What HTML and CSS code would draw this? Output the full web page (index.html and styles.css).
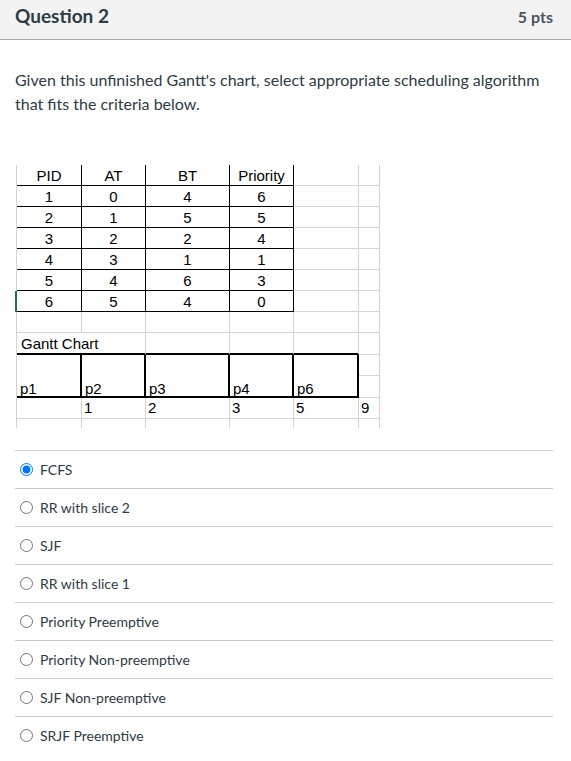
FILE: index.html
```html
<!DOCTYPE html>
<html lang="en">
<head>
<meta charset="utf-8">
<title>Question 2</title>
<link rel="stylesheet" href="styles.css">
</head>
<body>
<header class="q-header">
  <span class="q-title">Question 2</span>
  <span class="q-pts">5 pts</span>
</header>
<main class="q-body">
  <p class="q-text">Given this unfinished Gantt's chart, select appropriate scheduling algorithm that fits the criteria below.</p>

  <div class="sheet">
    <!-- row 0: header -->
    <div class="c ctr br bb">PID</div>
    <div class="c ctr br bb">AT</div>
    <div class="c ctr br bb">BT</div>
    <div class="c ctr br bb">Priority</div>
    <div class="c"></div>
    <div class="c"></div>
    <!-- rows 1-6 -->
    <div class="c ctr br bb">1</div><div class="c ctr br bb">0</div><div class="c ctr br bb">4</div><div class="c ctr br bb">6</div><div class="c"></div><div class="c"></div>
    <div class="c ctr br bb">2</div><div class="c ctr br bb">1</div><div class="c ctr br bb">5</div><div class="c ctr br bb">5</div><div class="c"></div><div class="c"></div>
    <div class="c ctr br bb">3</div><div class="c ctr br bb">2</div><div class="c ctr br bb">2</div><div class="c ctr br bb">4</div><div class="c"></div><div class="c"></div>
    <div class="c ctr br bb">4</div><div class="c ctr br bb">3</div><div class="c ctr br bb">1</div><div class="c ctr br bb">1</div><div class="c"></div><div class="c"></div>
    <div class="c ctr br bb">5</div><div class="c ctr br bb">4</div><div class="c ctr br bb">6</div><div class="c ctr br bb">3</div><div class="c"></div><div class="c"></div>
    <div class="c ctr br bb sel">6</div><div class="c ctr br bb">5</div><div class="c ctr br bb">4</div><div class="c ctr br bb">0</div><div class="c"></div><div class="c"></div>
    <!-- row 7 -->
    <div class="c"></div><div class="c"></div><div class="c"></div><div class="c"></div><div class="c"></div><div class="c"></div>
    <!-- row 8: label -->
    <div class="c label tb span2">Gantt Chart</div>
    <div class="c tb"></div>
    <div class="c tb"></div>
    <div class="c tb"></div>
    <div class="c"></div>
    <!-- rows 9-10: gantt bars -->
    <div class="c gantt">p1</div>
    <div class="c gantt">p2</div>
    <div class="c gantt">p3</div>
    <div class="c gantt">p4</div>
    <div class="c gantt">p6</div>
    <div class="c"></div>
    <div class="c"></div>
    <!-- row 11: times -->
    <div class="c"></div>
    <div class="c lft">1</div>
    <div class="c lft">2</div>
    <div class="c lft">3</div>
    <div class="c lft">5</div>
    <div class="c lft">9</div>
    <!-- row 12: partial -->
    <div class="c nb"></div><div class="c nb"></div><div class="c nb"></div><div class="c nb"></div><div class="c nb"></div><div class="c nb"></div>
  </div>

  <ul class="answers">
    <li class="answer"><label class="opt"><input type="radio" name="q2" checked><span>FCFS</span></label></li>
    <li class="answer"><label class="opt"><input type="radio" name="q2"><span>RR with slice 2</span></label></li>
    <li class="answer"><label class="opt"><input type="radio" name="q2"><span>SJF</span></label></li>
    <li class="answer"><label class="opt"><input type="radio" name="q2"><span>RR with slice 1</span></label></li>
    <li class="answer"><label class="opt"><input type="radio" name="q2"><span>Priority Preemptive</span></label></li>
    <li class="answer"><label class="opt"><input type="radio" name="q2"><span>Priority Non-preemptive</span></label></li>
    <li class="answer"><label class="opt"><input type="radio" name="q2"><span>SJF Non-preemptive</span></label></li>
    <li class="answer"><label class="opt"><input type="radio" name="q2"><span>SRJF Preemptive</span></label></li>
  </ul>
</main>
</body>
</html>
```

FILE: styles.css
```css
* { box-sizing: border-box; }

html, body {
  margin: 0;
  padding: 0;
  background: #ffffff;
}

body {
  font-family: Lato, "Noto Sans", sans-serif;
  color: #2d3b45;
}

.q-header {
  display: flex;
  justify-content: space-between;
  align-items: baseline;
  height: 40px;
  padding: 5px 18px 0 15px;
  background: #f3f3f3;
  border-bottom: 1px solid #a9a9a9;
}

.q-title {
  font-size: 19px;
  font-weight: 700;
  line-height: 22px;
  color: #2d3b45;
}

.q-pts {
  font-size: 16px;
  font-weight: 700;
  line-height: 22px;
  color: #4a545b;
}

.q-body {
  padding: 0 18px 0 15px;
}

.q-text {
  margin: 28px 0 0 0;
  font-size: 16px;
  line-height: 24px;
}

/* spreadsheet picture */
.sheet {
  margin: 49px 0 0 1px;
  width: 364px;
  display: grid;
  grid-template-columns: 65px 64px 84px 64px 65px 21px;
  grid-template-rows: repeat(8, 21px) 22px 21px 22px 21px 9px;
  border-left: 1px solid #d4d4d4;
  font-family: "Liberation Sans", Arial, sans-serif;
  font-size: 15px;
  color: #000;
}

.c {
  display: flex;
  align-items: flex-end;
  line-height: 17px;
  padding-bottom: 1px;
  border-right: 1px solid #d4d4d4;
  border-bottom: 1px solid #d4d4d4;
  white-space: nowrap;
  overflow: visible;
}

.ctr { justify-content: center; }
.lft { padding-left: 2px; padding-bottom: 2px; }
.br { border-right-color: #000; }
.bb { border-bottom-color: #000; }
.nb { border-bottom: none; }

.sel { box-shadow: -2px 0 0 #217346; }

.span2 { grid-column: span 2; }
.label { padding-left: 4px; padding-bottom: 1px; }
.tb { border-bottom: 2px solid #000; }

.gantt {
  grid-row: span 2;
  border-right: 2px solid #000;
  border-bottom: 2px solid #000;
  padding-left: 3px;
  padding-bottom: 0;
  line-height: 15px;
}

/* answers */
.answers {
  list-style: none;
  margin: 22px 0 0 0;
  padding: 0;
}

.answer {
  height: 38px;
  border-top: 1px solid #c7cdd1;
}

.opt {
  display: flex;
  align-items: center;
  height: 37px;
  font-size: 14px;
  color: #2d3b45;
}

.opt input {
  width: 13px;
  height: 13px;
  margin: 0 7px 0 5px;
  flex: none;
}
```
